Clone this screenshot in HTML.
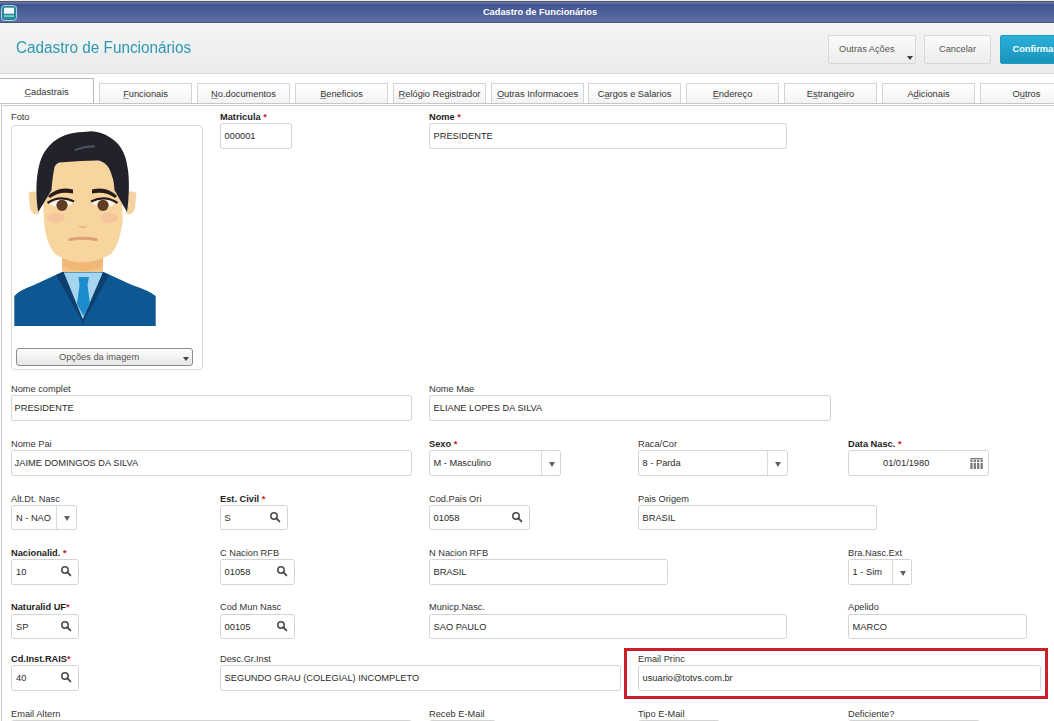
<!DOCTYPE html><html><head><meta charset="utf-8"><style>
*{margin:0;padding:0;box-sizing:border-box}
html,body{width:1054px;height:721px;overflow:hidden;background:#fff;font-family:"Liberation Sans",sans-serif}
.lb{position:absolute;font-size:9.25px;line-height:12px;color:#333;white-space:nowrap}
.lb.b{font-weight:bold;color:#1e1e1e}
.rq{color:#c0282d;font-weight:bold}
.in{position:absolute;border:1px solid #d4d4d4;border-radius:2.5px;background:#fff}
.tx{position:absolute;font-size:9.25px;line-height:12px;color:#2a2a2a;white-space:nowrap}
.sx{display:inline-block}
.sxl{display:inline-block}
.ic{position:absolute}
.dv{position:absolute;top:0;width:1px;background:#dcdcdc}
.ar{position:absolute;width:0;height:0;border-left:3px solid transparent;border-right:3px solid transparent;border-top:4px solid #7a7a80}
#tb{position:absolute;left:0;top:1px;width:1054px;height:22px;background:linear-gradient(#55596a 0,#55596a 1px,#6272a0 1px,#5a6a9c 3px,#3f5390 3px,#5f6fa6 21px,#4a5270 21px,#4a5270 22px)}
#tbt{position:absolute;left:0;top:0;width:1080px;text-align:center;font-size:9.25px;font-weight:bold;color:#fff;line-height:22px}
#hd{position:absolute;left:0;top:23px;width:1054px;height:51px;background:linear-gradient(#f4f5f5,#eaebec);border-bottom:1px solid #d6d8da}
#ht{position:absolute;left:16px;top:14.9px;font-size:16px;color:#2d98b0;line-height:20px;white-space:nowrap;transform:scaleX(0.956);transform-origin:0 0}
.btn{position:absolute;top:12px;height:29px;border:1px solid #d8d8d8;border-radius:2px;background:linear-gradient(#fbfbfb,#ececec);font-size:9.25px;color:#555;line-height:27px;text-align:center}
.tab{position:absolute;top:83px;width:93px;height:20px;border:1px solid #d4d4d4;border-bottom:none;background:linear-gradient(#fff,#f3f3f3);font-size:9.25px;color:#333;text-align:center;line-height:20px}
.tab u{text-decoration:underline;text-decoration-color:#999;text-underline-offset:1px}
</style></head><body>

<div id="tb"><div id="tbt"><span class="sx">Cadastro de Funcionários</span></div></div>
<div style="position:absolute;left:0;top:0;width:1054px;height:1px;background:#e8e8e8"></div>
<svg style="position:absolute;left:1px;top:5px" width="16" height="16" viewBox="0 0 16 16"><rect x="0.5" y="0.5" width="15" height="15" rx="3" fill="#2b8a9a" stroke="#9fd8ea"/><rect x="3" y="2.7" width="10" height="6" fill="#f4f6fb"/><rect x="3" y="10.4" width="10" height="1.3" fill="#9fe4ea"/></svg>
<div id="hd"><div id="ht">Cadastro de Funcionários</div>
<div class="btn" style="left:828px;width:88px;text-align:left;padding-left:10px"><span class="sxl">Outras Ações</span><div class="ar" style="left:78px;top:20px;border-left-width:3.5px;border-right-width:3.5px;border-top-width:4px;border-top-color:#444"></div></div>
<div class="btn" style="left:924px;width:67px"><span class="sx">Cancelar</span></div>
<div class="btn" style="left:1000px;width:70px;border-color:#1c9cc0;background:linear-gradient(#2bb0d8,#1993bb);color:#fff;font-weight:bold;text-align:left;padding-left:11.5px"><span class="sxl">Confirmar</span></div>
</div>
<div style="position:absolute;left:1px;top:105px;width:1060px;height:700px;border:1px solid #cbcbcb;border-right:none"></div>
<div class="tab" style="left:99px"><span class="sx"><u>F</u>uncionais</span></div>
<div class="tab" style="left:197px"><span class="sx"><u>N</u>o.documentos</span></div>
<div class="tab" style="left:295px"><span class="sx"><u>B</u>eneficios</span></div>
<div class="tab" style="left:393px"><span class="sx"><u>R</u>elógio Registrador</span></div>
<div class="tab" style="left:491px"><span class="sx"><u>O</u>utras Informacoes</span></div>
<div class="tab" style="left:588px"><span class="sx">C<u>a</u>rgos e Salarios</span></div>
<div class="tab" style="left:686px"><span class="sx"><u>E</u>ndereço</span></div>
<div class="tab" style="left:784px"><span class="sx">E<u>s</u>trangeiro</span></div>
<div class="tab" style="left:882px"><span class="sx">A<u>d</u>icionais</span></div>
<div class="tab" style="left:980px"><span class="sx">O<u>u</u>tros</span></div>
<div class="tab" style="left:0;top:78px;width:94px;height:25px;background:#fff;border-color:#b8b8b8;border-left:none;line-height:26px"><span class="sx"><u>C</u>adastrais</span></div>
<div style="position:absolute;left:0;top:103px;width:1054px;height:1px;background:#c6c6c6"></div>
<div class="lb" style="left:11px;top:111.09px">Foto</div>
<div style="position:absolute;left:11px;top:125px;width:192px;height:245px;border:1px solid #dadada;border-radius:4px;background:#fff"></div>
<div style="position:absolute;left:16px;top:348px;width:177px;height:18px;border:1px solid #8c8c8c;border-radius:3px;background:linear-gradient(#fdfdfd,#e6e6e6);font-size:9.25px;color:#555;text-align:left;padding-left:42px;line-height:16px"><span class="sxl">Opções da imagem</span><div class="ar" style="left:166px;top:7.5px;border-top-color:#444;border-left-width:3.5px;border-right-width:3.5px"></div></div>
<svg style="position:absolute;left:12px;top:126px" width="150" height="205" viewBox="0 0 150 205">
<defs><filter id="bl" x="-5%" y="-5%" width="110%" height="110%"><feGaussianBlur stdDeviation="0.6"/></filter></defs>
<g filter="url(#bl)">
<path d="M50 130 L91 130 L91 150 L50 150 Z" fill="#f3c58e"/>
<path d="M50 132 Q70 142 91 132 L91 140 Q70 150 50 140 Z" fill="#eeb06a" opacity="0.7"/>
<path d="M2.3 200 L2.3 170 Q6 165 22 159 L50 146 L91.6 146 L120 159 Q138 165 143.7 170 L143.7 200 Z" fill="#0e5892"/>
<path d="M44 149 L70.8 197 L97 149 L90.8 146 L70.8 190 L51.8 146 Z" fill="#0f416e"/>
<path d="M51.8 146.4 L70.8 193 L90.8 146.4 Z" fill="#a6d6ef"/>
<path d="M66.5 151 L77 151 L75.5 159 L78 178 L71.5 190 L65 178 L67.5 159 Z" fill="#1f8ccc"/>
<path d="M16.5 67 Q18 65 24 65.5 L27 88 Q20 90 18 82 Z" fill="#f5d3a0"/>
<path d="M124.5 67 Q123 65 117 65.5 L114 88 Q121 90 123 82 Z" fill="#f5d3a0"/>
<path d="M31 60 Q31 34 70.5 33 Q110 34 110 60 L110.7 94 Q108 118 99 128 Q86 136 70.8 135.5 Q55 136 43 128 Q34 118 31.8 94 Z" fill="#f8d59f"/>
<path d="M26.2 86 C23.5 70 24 52 27 40 C29 31 33 24 38 19 C45 11 58 6 71.3 5.9 L79.6 5.2 C90 6 100 11 106 18 C111 24 114 31 115.3 40 C117.5 50 117.5 70 115 86 L102.5 64.2 C102 58 101.5 54 100.5 51.7 C98.5 44 96.5 41 94.8 39.2 C92 36 88 34.5 85.1 34.4 L68.5 35 L47.7 36.4 C45 37 43.5 39 42.5 41 C41 48 40 58 39.5 64.2 Z" fill="#23232b"/>
<path d="M63 24 Q73 20 83 20.5" stroke="#4a5262" stroke-width="2.2" fill="none"/>
<path d="M36 70 Q46 59.5 61 63.5 L61 67.5 Q48 64.5 38 72 Z" fill="#2a1f1a"/>
<path d="M105 70 Q95 59.5 80 63.5 L80 67.5 Q93 64.5 103 72 Z" fill="#2a1f1a"/>
<path d="M36 77 Q48 69 62 76 Q50 87 36 77 Z" fill="#fbf4ea"/>
<path d="M105 77 Q93 69 79 76 Q91 87 105 77 Z" fill="#fbf4ea"/>
<circle cx="50" cy="79.3" r="5.6" fill="#5e3c20"/>
<circle cx="91" cy="79.3" r="5.6" fill="#5e3c20"/>
<path d="M35.5 77 Q48 68.5 62 75.5" stroke="#2a1f1a" stroke-width="2.4" fill="none"/>
<path d="M105.5 77 Q93 68.5 79 75.5" stroke="#2a1f1a" stroke-width="2.4" fill="none"/>
<ellipse cx="44" cy="92" rx="9" ry="5" fill="#f2aa95" opacity="0.35"/>
<ellipse cx="97" cy="92" rx="9" ry="5" fill="#f2aa95" opacity="0.35"/>
<path d="M67 100 Q70.8 103 74.5 100" stroke="#e8b07a" stroke-width="1.5" fill="none"/>
<path d="M58 113.5 Q70.8 111 84 113.5" stroke="#dba274" stroke-width="3.2" fill="none" stroke-linecap="round"/>
</g>
</svg>
<div class="lb b" style="left:220px;top:111.09px">Matricula <span class="rq">*</span></div>
<div class="in" style="left:220px;top:123px;width:72px;height:26px">
<span class="tx" style="left:3.6px;top:5.59px">000001</span>
</div>
<div class="lb b" style="left:429px;top:111.09px">Nome <span class="rq">*</span></div>
<div class="in" style="left:429px;top:123px;width:358px;height:26px">
<span class="tx" style="left:3.6px;top:5.59px">PRESIDENTE</span>
</div>
<div class="lb" style="left:11px;top:383.39px">Nome complet</div>
<div class="in" style="left:11px;top:395px;width:401px;height:26px">
<span class="tx" style="left:2.6px;top:5.59px">PRESIDENTE</span>
</div>
<div class="lb" style="left:429px;top:383.39px">Nome Mae</div>
<div class="in" style="left:429px;top:395px;width:402px;height:26px">
<span class="tx" style="left:3.6px;top:5.59px">ELIANE LOPES DA SILVA</span>
</div>
<div class="lb" style="left:11px;top:437.89px">Nome Pai</div>
<div class="in" style="left:11px;top:450px;width:401px;height:26px">
<span class="tx" style="left:2.6px;top:5.59px">JAIME DOMINGOS DA SILVA</span>
</div>
<div class="lb b" style="left:429px;top:437.89px">Sexo <span class="rq">*</span></div>
<div class="in" style="left:429px;top:450px;width:132px;height:26px">
<span class="tx" style="left:3.6px;top:5.59px">M - Masculino</span>
<div class="dv" style="left:111px;height:24px"></div>
<div class="ar" style="left:118.6px;top:10.5px;border-left-width:3.3px;border-right-width:3.3px;border-top-width:5px;border-top-color:#606066"></div>
</div>
<div class="lb" style="left:638px;top:437.89px">Raca/Cor</div>
<div class="in" style="left:638px;top:450px;width:150px;height:26px">
<span class="tx" style="left:3.6px;top:5.59px">8 - Parda</span>
<div class="dv" style="left:128px;height:24px"></div>
<div class="ar" style="left:136.1px;top:10.5px;border-left-width:3.3px;border-right-width:3.3px;border-top-width:5px;border-top-color:#606066"></div>
</div>
<div class="lb b" style="left:848px;top:437.89px">Data Nasc. <span class="rq">*</span></div>
<div class="in" style="left:848px;top:450px;width:141px;height:26px">
<span class="tx" style="left:34px;top:5.59px">01/01/1980</span>
<svg class="ic" style="left:121px;top:7.0px" width="14" height="12" viewBox="0 0 14 12"><rect x="0.3" y="0" width="12.5" height="1.2" fill="#7a7a7a"/><rect x="0.3" y="1.6" width="2.3" height="2.5" fill="#7a7a7a"/><rect x="0.3" y="5" width="2.3" height="6" fill="#7a7a7a"/><rect x="3.7" y="1.6" width="2.3" height="2.5" fill="#7a7a7a"/><rect x="3.7" y="5" width="2.3" height="6" fill="#7a7a7a"/><rect x="7.0" y="1.6" width="2.3" height="2.5" fill="#7a7a7a"/><rect x="7.0" y="5" width="2.3" height="6" fill="#7a7a7a"/><rect x="10.5" y="1.6" width="2.3" height="2.5" fill="#7a7a7a"/><rect x="10.5" y="5" width="2.3" height="6" fill="#7a7a7a"/></svg>
</div>
<div class="lb" style="left:11px;top:492.59px">Alt.Dt. Nasc</div>
<div class="in" style="left:11px;top:505px;width:66px;height:25px">
<span class="tx" style="left:4.0px;top:5.59px">N - NAO</span>
<div class="dv" style="left:44px;height:23px"></div>
<div class="ar" style="left:52.1px;top:10.0px;border-left-width:3.3px;border-right-width:3.3px;border-top-width:5px;border-top-color:#606066"></div>
</div>
<div class="lb b" style="left:220px;top:492.59px">Est. Civil <span class="rq">*</span></div>
<div class="in" style="left:220px;top:505px;width:68px;height:25px">
<span class="tx" style="left:3.6px;top:5.59px">S</span>
<svg class="ic" style="left:48px;top:4.8px" width="12" height="12" viewBox="0 0 12 12"><circle cx="5" cy="5" r="3.2" fill="none" stroke="#4a4a4e" stroke-width="1.5"/><line x1="7.2" y1="7.2" x2="10.4" y2="10.4" stroke="#4a4a4e" stroke-width="1.9" stroke-linecap="round"/></svg>
</div>
<div class="lb" style="left:429px;top:492.59px">Cod.Pais Ori</div>
<div class="in" style="left:429px;top:505px;width:101px;height:25px">
<span class="tx" style="left:3.6px;top:5.59px">01058</span>
<svg class="ic" style="left:81px;top:4.8px" width="12" height="12" viewBox="0 0 12 12"><circle cx="5" cy="5" r="3.2" fill="none" stroke="#4a4a4e" stroke-width="1.5"/><line x1="7.2" y1="7.2" x2="10.4" y2="10.4" stroke="#4a4a4e" stroke-width="1.9" stroke-linecap="round"/></svg>
</div>
<div class="lb" style="left:638px;top:492.59px">Pais Origem</div>
<div class="in" style="left:638px;top:505px;width:239px;height:25px">
<span class="tx" style="left:3.6px;top:5.59px">BRASIL</span>
</div>
<div class="lb b" style="left:11px;top:546.89px">Nacionalid. <span class="rq">*</span></div>
<div class="in" style="left:11px;top:559px;width:68px;height:26px">
<span class="tx" style="left:4.0px;top:5.59px">10</span>
<svg class="ic" style="left:48px;top:5.3px" width="12" height="12" viewBox="0 0 12 12"><circle cx="5" cy="5" r="3.2" fill="none" stroke="#4a4a4e" stroke-width="1.5"/><line x1="7.2" y1="7.2" x2="10.4" y2="10.4" stroke="#4a4a4e" stroke-width="1.9" stroke-linecap="round"/></svg>
</div>
<div class="lb" style="left:220px;top:546.89px">C Nacion RFB</div>
<div class="in" style="left:220px;top:559px;width:75px;height:26px">
<span class="tx" style="left:3.6px;top:5.59px">01058</span>
<svg class="ic" style="left:55px;top:5.3px" width="12" height="12" viewBox="0 0 12 12"><circle cx="5" cy="5" r="3.2" fill="none" stroke="#4a4a4e" stroke-width="1.5"/><line x1="7.2" y1="7.2" x2="10.4" y2="10.4" stroke="#4a4a4e" stroke-width="1.9" stroke-linecap="round"/></svg>
</div>
<div class="lb" style="left:429px;top:546.89px">N Nacion RFB</div>
<div class="in" style="left:429px;top:559px;width:239px;height:26px">
<span class="tx" style="left:3.6px;top:5.59px">BRASIL</span>
</div>
<div class="lb" style="left:848px;top:546.89px">Bra.Nasc.Ext</div>
<div class="in" style="left:848px;top:559px;width:64px;height:26px">
<span class="tx" style="left:3.6px;top:5.59px">1 - Sim</span>
<div class="dv" style="left:43px;height:24px"></div>
<div class="ar" style="left:50.6px;top:10.5px;border-left-width:3.3px;border-right-width:3.3px;border-top-width:5px;border-top-color:#606066"></div>
</div>
<div class="lb b" style="left:11px;top:601.49px">Naturalid UF<span class="rq">*</span></div>
<div class="in" style="left:11px;top:614px;width:68px;height:25px">
<span class="tx" style="left:4.0px;top:5.59px">SP</span>
<svg class="ic" style="left:48px;top:4.8px" width="12" height="12" viewBox="0 0 12 12"><circle cx="5" cy="5" r="3.2" fill="none" stroke="#4a4a4e" stroke-width="1.5"/><line x1="7.2" y1="7.2" x2="10.4" y2="10.4" stroke="#4a4a4e" stroke-width="1.9" stroke-linecap="round"/></svg>
</div>
<div class="lb" style="left:220px;top:601.49px">Cod Mun Nasc</div>
<div class="in" style="left:220px;top:614px;width:75px;height:25px">
<span class="tx" style="left:3.6px;top:5.59px">00105</span>
<svg class="ic" style="left:55px;top:4.8px" width="12" height="12" viewBox="0 0 12 12"><circle cx="5" cy="5" r="3.2" fill="none" stroke="#4a4a4e" stroke-width="1.5"/><line x1="7.2" y1="7.2" x2="10.4" y2="10.4" stroke="#4a4a4e" stroke-width="1.9" stroke-linecap="round"/></svg>
</div>
<div class="lb" style="left:429px;top:601.49px">Municp.Nasc.</div>
<div class="in" style="left:429px;top:614px;width:358px;height:25px">
<span class="tx" style="left:3.6px;top:5.59px">SAO PAULO</span>
</div>
<div class="lb" style="left:848px;top:601.49px">Apelido</div>
<div class="in" style="left:848px;top:614px;width:179px;height:25px">
<span class="tx" style="left:3.6px;top:5.59px">MARCO</span>
</div>
<div class="lb b" style="left:11px;top:652.99px">Cd.Inst.RAIS<span class="rq">*</span></div>
<div class="in" style="left:11px;top:665px;width:68px;height:26px">
<span class="tx" style="left:4.0px;top:5.59px">40</span>
<svg class="ic" style="left:48px;top:5.3px" width="12" height="12" viewBox="0 0 12 12"><circle cx="5" cy="5" r="3.2" fill="none" stroke="#4a4a4e" stroke-width="1.5"/><line x1="7.2" y1="7.2" x2="10.4" y2="10.4" stroke="#4a4a4e" stroke-width="1.9" stroke-linecap="round"/></svg>
</div>
<div class="lb" style="left:220px;top:652.99px">Desc.Gr.Inst</div>
<div class="in" style="left:220px;top:665px;width:401px;height:26px">
<span class="tx" style="left:3.6px;top:5.59px">SEGUNDO GRAU (COLEGIAL) INCOMPLETO</span>
</div>
<div class="lb" style="left:638px;top:653.39px">Email Princ</div>
<div class="in" style="left:638px;top:665px;width:403px;height:26px">
<span class="tx" style="left:3.6px;top:5.59px">usuario@totvs.com.br</span>
</div>
<div style="position:absolute;left:624px;top:648px;width:424px;height:51px;border:3px solid #c9202b"></div>
<div class="lb" style="left:11px;top:708.09px">Email Altern</div>
<div class="in" style="left:11px;top:720px;width:401px;height:26px">
</div>
<div class="lb" style="left:429px;top:708.09px">Receb E-Mail</div>
<div class="in" style="left:429px;top:720px;width:67px;height:26px">
</div>
<div class="lb" style="left:638px;top:708.09px">Tipo E-Mail</div>
<div class="in" style="left:638px;top:720px;width:82px;height:26px">
</div>
<div class="lb" style="left:848px;top:708.09px">Deficiente?</div>
<div class="in" style="left:848px;top:720px;width:132px;height:26px">
</div>
</body></html>
